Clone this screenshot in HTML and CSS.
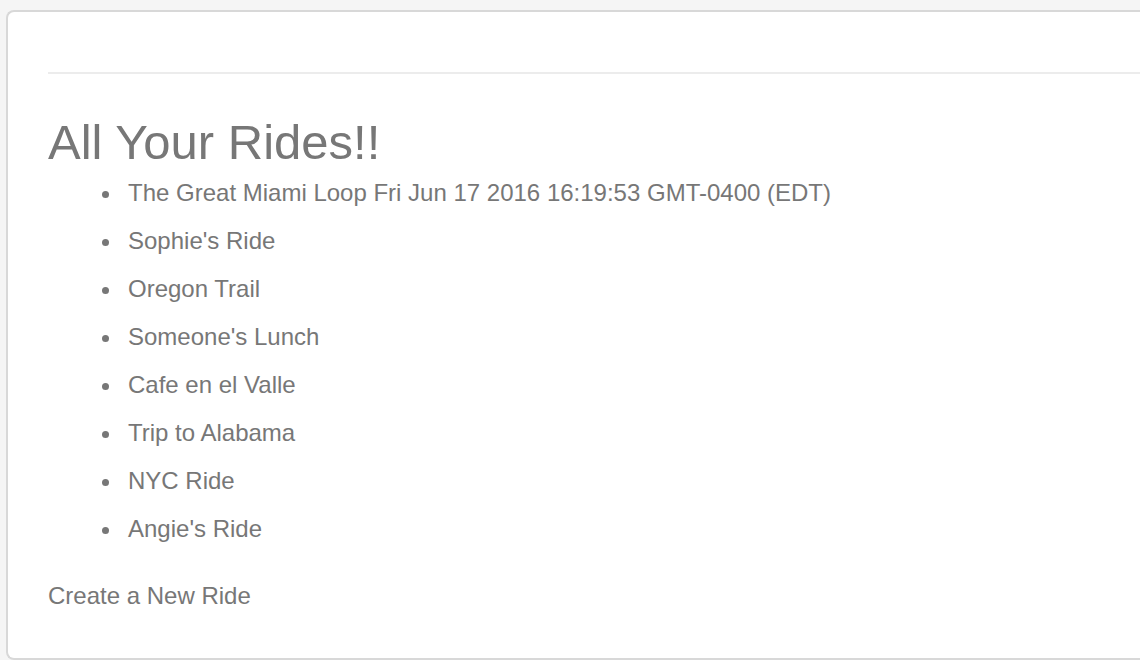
FILE: index.html
```html
<!DOCTYPE html>
<html lang="en">
<head>
<meta charset="utf-8">
<title>All Your Rides</title>
<link rel="stylesheet" href="styles.css">
</head>
<body>
<div class="card">
  <div class="divider"></div>
  <h1 class="title">All Your Rides!!</h1>
  <ul class="rides">
    <li class="ride">The Great Miami Loop Fri Jun 17 2016 16:19:53 GMT-0400 (EDT)</li>
    <li class="ride">Sophie's Ride</li>
    <li class="ride">Oregon Trail</li>
    <li class="ride">Someone's Lunch</li>
    <li class="ride">Cafe en el Valle</li>
    <li class="ride">Trip to Alabama</li>
    <li class="ride">NYC Ride</li>
    <li class="ride">Angie's Ride</li>
  </ul>
  <a class="create-link">Create a New Ride</a>
</div>
</body>
</html>
```

FILE: styles.css
```css
html, body {
  margin: 0;
  padding: 0;
  background: #f5f5f5;
  overflow: hidden;
  width: 1140px;
  height: 660px;
}

body {
  font-family: "Liberation Sans", Arial, Helvetica, sans-serif;
  color: #777777;
}

.card {
  box-sizing: border-box;
  margin: 10px 0 0 6px;
  width: 1134px;
  height: 650px;
  background: #ffffff;
  border: 2px solid #d8d8d8;
  border-right: none;
  border-radius: 8px 0 0 8px;
  padding: 60px 0 0 40px;
  display: flex;
  flex-direction: column;
  align-items: flex-start;
}

.divider {
  align-self: stretch;
  height: 0;
  border-top: 2px solid #ececec;
}

.title {
  margin: 42px 0 0 0;
  font-size: 49px;
  line-height: 53px;
  font-weight: normal;
  color: #777777;
}

.rides {
  list-style: none;
  margin: 0;
  padding: 0 0 0 54px;
}

.ride {
  display: flex;
  align-items: center;
  height: 48px;
  font-size: 24px;
  line-height: 48px;
  white-space: nowrap;
}

.ride::before {
  content: "";
  width: 7px;
  height: 7px;
  border-radius: 50%;
  background: #777777;
  margin: 2px 19px 0 0;
  flex: none;
}

.create-link {
  margin-top: 19px;
  font-size: 24px;
  line-height: 48px;
  color: #777777;
  text-decoration: none;
}
```
